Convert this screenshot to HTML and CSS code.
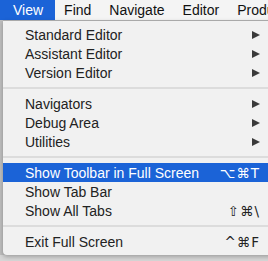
FILE: index.html
```html
<!DOCTYPE html>
<html>
<head>
    <meta charset="utf-8" />
    <title>View menu</title>
    <link rel="stylesheet" href="styles.css">
</head>
<body>
<div class="menubar">
    <span class="item on">View</span>
    <span class="item">Find</span>
    <span class="item">Navigate</span>
    <span class="item">Editor</span>
    <span class="item">Product</span>
</div>
<div class="stage">
    <div class="menu">
        <div class="row">Standard Editor<i class="arrow"></i></div>
        <div class="row">Assistant Editor<i class="arrow"></i></div>
        <div class="row">Version Editor<i class="arrow"></i></div>
        <div class="sep"></div>
        <div class="row">Navigators<i class="arrow"></i></div>
        <div class="row">Debug Area<i class="arrow"></i></div>
        <div class="row">Utilities<i class="arrow"></i></div>
        <div class="sep"></div>
        <div class="row sel">Show Toolbar in Full Screen<span class="key">⌥⌘T</span></div>
        <div class="row">Show Tab Bar</div>
        <div class="row">Show All Tabs<span class="key">⇧⌘\</span></div>
        <div class="sep"></div>
        <div class="row">Exit Full Screen<span class="key">^⌘F</span></div>
    </div>
</div>
</body>
</html>
```
FILE: styles.css
```css
html,body{margin:0;padding:0;}
body{
    width:268px;
    height:261px;
    overflow:hidden;
    background:#d6d6d6;
    font-family:'Liberation Sans','DejaVu Sans',Arial,sans-serif;
    font-size:14px;
    color:#222;
}
/*menu bar*/
.menubar{
    display:flex;
    height:20px;
    background:#f4f4f4;
    white-space:nowrap;
}
.menubar .item{
    padding:0 9px;
    line-height:20px;
    color:#111;
}
.menubar .item:first-child{padding:0 12px 0 13px;}
.menubar .on{
    background:#1b63d7;
    color:#fff;
}
/*menu*/
.stage{
    display:flex;
    padding-left:3px;
    background:#bdbdbd;
}
.menu{
    width:290px;
    flex:none;
    background:#f1f1f1;
    border-top:1px solid #a9a9a9;
    padding:4px 0 4px;
    box-shadow:0 2px 4px rgba(0,0,0,.25);
    border-bottom-left-radius:4px;
}
.menu .row{
    display:flex;
    align-items:center;
    height:19px;
    padding-left:22px;
    width:235px;
    white-space:nowrap;
}
.menu .row.sel{
    background:#1b63d7;
    color:#fff;
    width:257px;
}
.menu .arrow{
    margin-left:auto;
    width:0;
    height:0;
    border-top:4.5px solid transparent;
    border-bottom:4.5px solid transparent;
    border-left:8px solid #3a3a3a;
}
.menu .key{
    margin-left:auto;
    font-size:13.5px;
    letter-spacing:1px;
    font-family:'DejaVu Sans','Liberation Sans',sans-serif;
}
.menu .sel .key{margin-right:22px;}
.menu .sep{
    height:2px;
    background:#dcdcdc;
    margin:5px 0;
}
```
